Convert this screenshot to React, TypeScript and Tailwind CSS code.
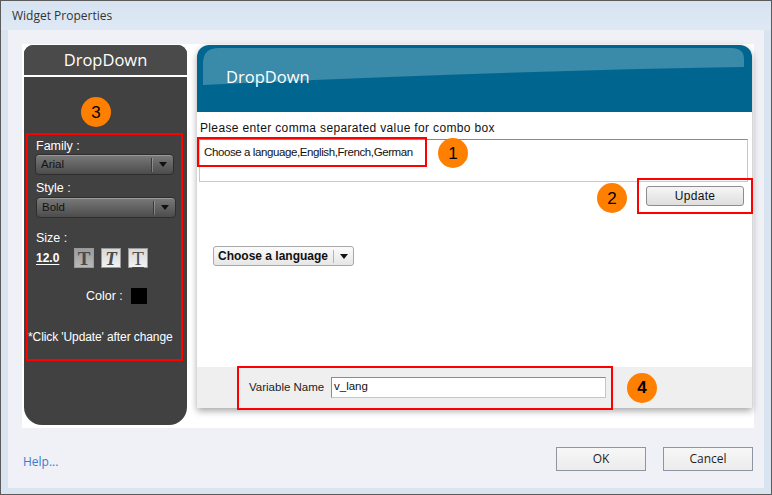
import React from "react";

const sans = { fontFamily: '"Liberation Sans", Arial, sans-serif' };
const ui = { fontFamily: '"Open Sans", "Noto Sans", sans-serif' };

function Badge({ n, className = "" }: { n: string; className?: string }) {
  return (
    <div
      className={`absolute w-[30px] h-[30px] rounded-full bg-[#ff7f00] flex items-center justify-center text-[17px] text-black leading-none ${className}`}
      style={sans}
    >
      {n}
    </div>
  );
}

function DarkSelect({ value, width }: { value: string; width: string }) {
  return (
    <div
      className={`${width} h-[21px] rounded-[4px] border border-[#2e2e2e] bg-gradient-to-b from-[#7a7a7a] to-[#4c4c4c] flex items-center shadow-[inset_0_1px_0_rgba(255,255,255,0.25)]`}
    >
      <span className="flex-1 pl-[5px] text-[11.5px] text-[#141414]" style={sans}>
        {value}
      </span>
      <div className="w-px h-[14px] bg-[#3a3a3a] shadow-[1px_0_0_rgba(255,255,255,0.25)]" />
      <div className="w-[21px] flex items-center justify-center">
        <svg width="8" height="5" viewBox="0 0 8 5">
          <path d="M0 0 H8 L4 5 Z" fill="#111" />
        </svg>
      </div>
    </div>
  );
}

function StyleBtn({ kind, active }: { kind: "b" | "i" | "u"; active?: boolean }) {
  return (
    <div
      className={`w-[20px] h-[20px] flex items-center justify-center border border-[#9a9a9a] ${
        active ? "bg-gradient-to-b from-[#9c9c9c] to-[#b8b8b8]" : "bg-gradient-to-b from-[#d8d8d8] to-[#f2f2f2]"
      }`}
    >
      <span
        className={`text-[19px] leading-none text-[#4a4a4a] ${kind === "b" ? "font-bold" : ""} ${
          kind === "i" ? "italic font-bold" : ""
        } ${kind === "u" ? "underline underline-offset-2" : ""}`}
        style={{ fontFamily: '"Liberation Serif", "Times New Roman", serif' }}
      >
        T
      </span>
    </div>
  );
}

function LeftPanel() {
  return (
    <div className="w-[163px] h-[380px] bg-[#414141] rounded-t-[9px] rounded-b-[18px] flex flex-col overflow-hidden text-white">
      <div className="h-[30px] bg-[#4a4a4a] flex items-center justify-center text-[16.5px]" style={ui}>
        DropDown
      </div>
      <div className="h-[2px] bg-white" />
      <div className="relative h-[56px]">
        <Badge n="3" className="left-[57px] top-[20px]" />
      </div>
      <div className="ml-[2px] w-[157px] h-[228px] border-2 border-[#ff0000] flex flex-col text-[12px]" style={sans}>
        <div className="mt-[5px] ml-[8px] leading-[12px] text-[12.5px]">Family :</div>
        <div className="mt-[2px] ml-[7px]">
          <DarkSelect value="Arial" width="w-[139px]" />
        </div>
        <div className="mt-[7px] ml-[8px] leading-[12px] text-[12.5px]">Style :</div>
        <div className="mt-[3px] ml-[8px]">
          <DarkSelect value="Bold" width="w-[140px]" />
        </div>
        <div className="mt-[14px] ml-[8px] leading-[12px] text-[12.5px]">Size :</div>
        <div className="mt-[4px] ml-[8px] flex items-center">
          <span className="w-[38px] font-bold underline underline-offset-2 text-[12px]">12.0</span>
          <div className="flex gap-[7px]">
            <StyleBtn kind="b" active />
            <StyleBtn kind="i" />
            <StyleBtn kind="u" />
          </div>
        </div>
        <div className="mt-[20px] ml-[58px] flex items-center h-[16px]">
          <span className="w-[45px] text-[12.5px]">Color :</span>
          <div className="w-[16px] h-[16px] bg-black" />
        </div>
        <div className="mt-[27px] leading-[12px] whitespace-nowrap tracking-[-0.1px]">*Click 'Update' after change</div>
      </div>
    </div>
  );
}

function BlueHeader() {
  return (
    <div className="relative h-[67px] bg-[#006690] rounded-t-[12px] overflow-hidden">
      <svg className="absolute inset-0" width="555" height="67" viewBox="0 0 555 67">
        <path
          d="M6 40 L6 18 Q6 3 22 3 L534 3 Q547 3 547 14 L547 22 Q300 26 6 40 Z"
          fill="#3a8aaa"
        />
      </svg>
      <div className="relative pl-[29px] pt-[21px] text-[16.5px] text-white leading-[22px]" style={ui}>
        DropDown
      </div>
    </div>
  );
}

function RightPanel() {
  return (
    <div className="w-[555px] h-[363px] ml-[10px] bg-white flex flex-col shadow-[0_3px_7px_rgba(0,0,0,0.35)] rounded-t-[12px]">
      <BlueHeader />
      <div className="flex-1 flex flex-col" style={sans}>
        <div className="pt-[10px] pl-[3px] text-[12px] leading-[12px] text-[#111] tracking-[0.35px]">
          Please enter comma separated value for combo box
        </div>
        <div className="relative mt-[5px] ml-[2px] w-[549px] h-[43px] border border-[#c8c8c8] border-t-[#8a8a8a]">
          <div className="pl-[4px] pt-[6px] text-[11.5px] leading-[12px] text-[#111] tracking-[-0.4px]">
            Choose a language,English,French,German
          </div>
          <div className="absolute -left-[3px] -top-[3px] w-[230px] h-[30px] border-2 border-[#ff0000]" />
          <Badge n="1" className="left-[238px] -top-[2px]" />
        </div>
        <div className="flex justify-end -mt-[4px] -mr-[1px]">
          <div className="relative w-[116px] h-[36px] border-2 border-[#ff0000] flex items-center justify-center">
            <Badge n="2" className="-left-[42px] top-[3px]" />
            <button className="w-[98px] h-[20px] rounded-[3px] border border-[#8d8d8d] bg-gradient-to-b from-[#f6f6f6] to-[#dedede] text-[12px] text-[#111] tracking-[0.3px]">
              Update
            </button>
          </div>
        </div>
        <div className="mt-[32px] ml-[16px] w-[141px] h-[20px] rounded-[3px] border border-[#a9a9a9] bg-gradient-to-b from-[#fbfbfb] to-[#e6e6e6] flex items-center">
          <span className="pl-[4px] w-[119px] text-[12px] font-bold text-[#111] whitespace-nowrap">Choose a language</span>
          <div className="w-px h-[13px] bg-[#b5b5b5]" />
          <div className="flex-1 flex items-center justify-center">
            <svg width="8" height="5" viewBox="0 0 8 5">
              <path d="M0 0 H8 L4 5 Z" fill="#111" />
            </svg>
          </div>
        </div>
        <div className="flex-1" />
        <div className="h-[41px] bg-[#efefef] flex items-center">
          <div className="ml-[40px] w-[376px] h-[44px] border-2 border-[#ff0000] flex items-center">
            <span className="pl-[10px] w-[92px] shrink-0 text-[11.5px] text-[#222] whitespace-nowrap">Variable Name</span>
            <div className="w-[275px] shrink-0 h-[21px] bg-white border border-[#c6c6c6] border-t-[#8c8c8c] border-l-[#8c8c8c] flex items-center">
              <span className="pl-[2px] text-[11.5px] text-[#111] leading-[12px] -mt-[4px]">v_lang</span>
            </div>
          </div>
          <div className="relative ml-[14px] w-[30px] h-[30px]">
            <Badge n="4" className="left-0 top-0 font-bold" />
          </div>
        </div>
      </div>
    </div>
  );
}

function WinButton({ label }: { label: string }) {
  return (
    <button
      className="w-[90px] h-[24px] border border-[#8f95a3] bg-gradient-to-b from-[#f7f7f7] to-[#ececec] text-[12px] text-[#1e1e1e]"
      style={ui}
    >
      {label}
    </button>
  );
}

export default function App() {
  return (
    <div className="w-[772px] h-[495px] border border-[#5b5b5b] bg-[#d9e4f1] flex flex-col overflow-hidden">
      <div
        className="h-[29px] px-[11px] flex items-center text-[12px] text-[#333] bg-gradient-to-b from-[#d7e3f1] to-[#dfe9f5]"
        style={ui}
      >
        Widget Properties
      </div>
      <div className="flex-1 mx-[7px] mb-[6px] bg-[#eff1f7] flex flex-col">
        <div className="ml-[14px] mt-[14px] w-[732px] h-[384px] bg-white flex pl-[2px] pt-[1px]">
          <LeftPanel />
          <RightPanel />
        </div>
        <div className="flex-1 flex items-start">
          <div className="mt-[25px] ml-[15px] text-[12px] text-[#3a7bd0]" style={ui}>
            Help...
          </div>
          <div className="flex-1" />
          <div className="mt-[19px] mr-[11px] flex gap-[17px]">
            <WinButton label="OK" />
            <WinButton label="Cancel" />
          </div>
        </div>
      </div>
    </div>
  );
}
